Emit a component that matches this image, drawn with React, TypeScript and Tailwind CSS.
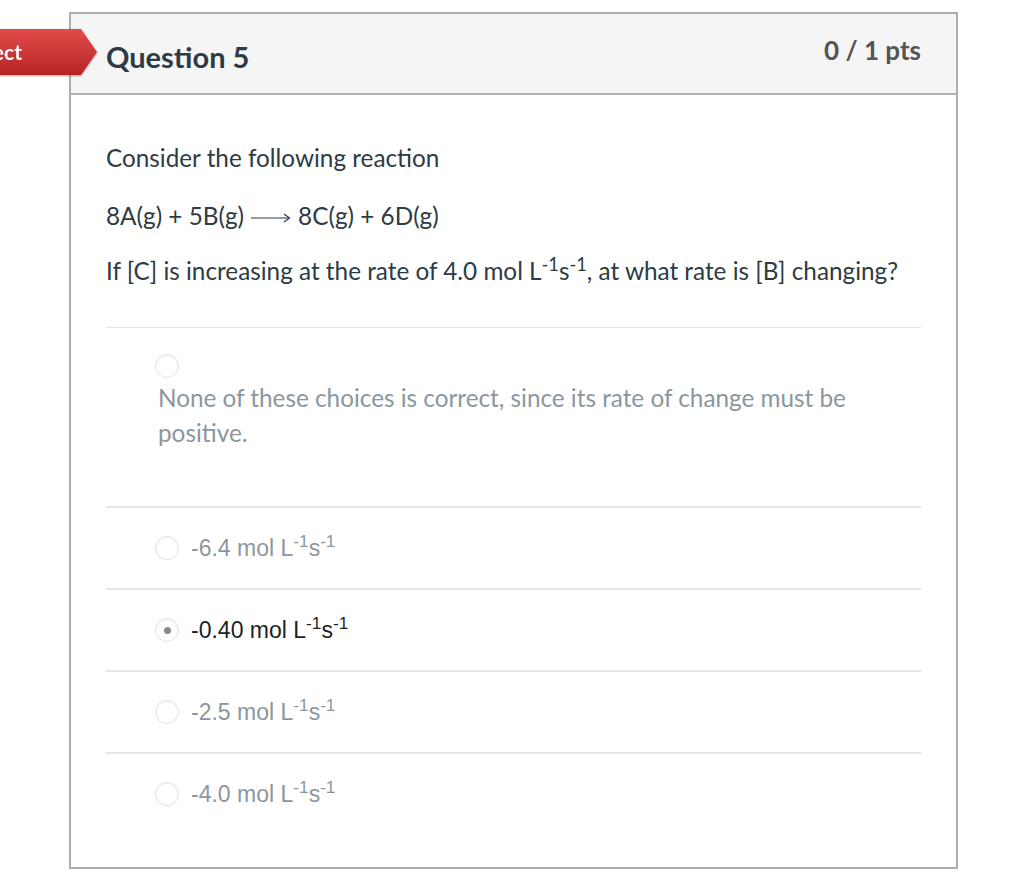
import React from 'react';

const Rate: React.FC<{ value: string }> = ({ value }) => (
  <span>
    {value} mol L<sup className="text-[0.75em]">-1</sup>s<sup className="text-[0.75em]">-1</sup>
  </span>
);

const Radio: React.FC<{ checked?: boolean }> = ({ checked }) => (
  <span className="w-[24px] h-[24px] rounded-full border border-[#e2e2e2] bg-white shadow-[inset_0_1px_2px_rgba(0,0,0,0.06)] flex items-center justify-center shrink-0">
    {checked && <span className="w-[7px] h-[7px] rounded-full bg-[#8a8a8a]" />}
  </span>
);

const options = [
  { value: '-6.4', checked: false },
  { value: '-0.40', checked: true },
  { value: '-2.5', checked: false },
  { value: '-4.0', checked: false },
];

export default function App() {
  return (
    <div className="relative w-[1024px] h-[895px] bg-white font-['Lato',sans-serif]">
      {/* Incorrect ribbon */}
      <div className="absolute left-0 top-[29px] w-[97px] h-[46px] drop-shadow-[0_1px_1px_rgba(0,0,0,0.35)]">
        <div className="w-full h-full overflow-hidden flex items-center justify-end pr-[75px] bg-gradient-to-b from-[#e44b4b] to-[#b52323] [clip-path:polygon(0_0,81px_0,97px_50%,81px_100%,0_100%)]">
          <span className="text-white font-bold text-[21px] whitespace-nowrap">Incorrect</span>
        </div>
      </div>

      <div className="ml-[69px] pt-[12px]">
        <div className="w-[889px] h-[857px] border-2 border-[#adadad] bg-white">
          {/* Header */}
          <div className="h-[81px] bg-[#f5f5f5] border-b-2 border-[#b3b3b3] flex justify-between px-[35px]">
            <h2 className="mt-[24px] text-[29px] leading-[38px] font-bold text-[#2d3b45]">Question 5</h2>
            <div className="mt-[20px] text-[26px] leading-[32px] font-bold text-[#555]">0 / 1 pts</div>
          </div>

          {/* Body */}
          <div className="px-[35px] pt-[47px]">
            <div className="text-[24.3px] leading-[31px] text-[#2d3b45]">
              <p>Consider the following reaction</p>
              <p className="mt-[27px] flex items-center">
                8A(g) + 5B(g)
                <svg width="40" height="14" viewBox="0 0 40 14" className="mx-[7px] mt-[4px]">
                  <line x1="0" y1="7" x2="38" y2="7" stroke="#2d3b45" strokeWidth="1.2" />
                  <path d="M33 3 L38.5 7 L33 11" fill="none" stroke="#2d3b45" strokeWidth="1.2" />
                </svg>
                8C(g) + 6D(g)
              </p>
              <p className="mt-[24px]">
                If [C] is increasing at the rate of 4.0 mol L<sup className="text-[0.75em]">-1</sup>s<sup className="text-[0.75em]">-1</sup>, at what rate is [B] changing?
              </p>
            </div>

            <div className="mt-[41px] border-t border-[#e6e6e6]">
              {/* None of these */}
              <div className="h-[178px] pl-[52px] pt-[26px]">
                <div className="-ml-[3px]"><Radio /></div>
                <p className="mt-[2px] text-[24.3px] leading-[35px] text-[#8b969e] w-[700px]">
                  None of these choices is correct, since its rate of change must be positive.
                </p>
              </div>

              {options.map((o) => (
                <div key={o.value} className="h-[82px] border-t-2 border-[#e6e6e6] flex items-center pl-[49px] gap-[12px]">
                  <Radio checked={o.checked} />
                  <span className={`font-['Liberation_Sans',sans-serif] text-[23px] leading-[30px] ${o.checked ? 'text-[#1f1f1f]' : 'text-[#8b969e]'}`}>
                    <Rate value={o.value} />
                  </span>
                </div>
              ))}
            </div>
          </div>
        </div>
      </div>
    </div>
  );
}
